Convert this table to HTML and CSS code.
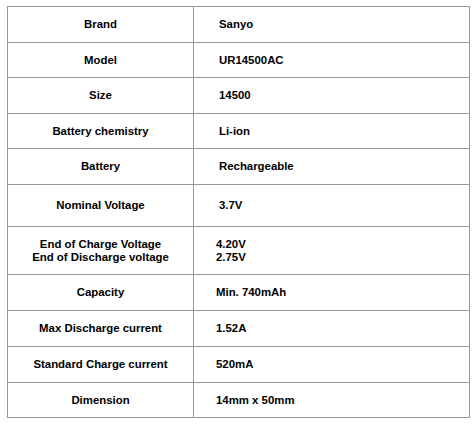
FILE: index.html
```html
<!DOCTYPE html>
<html>
<head>
<meta charset="utf-8">
<link rel="stylesheet" href="styles.css">
</head>
<body>
<table class="spec">
  <colgroup><col class="c1"><col class="c2"></colgroup>
  <tr class="r36"><td class="key">Brand</td><td class="val">Sanyo</td></tr>
  <tr class="r35"><td class="key">Model</td><td class="val">UR14500AC</td></tr>
  <tr class="r36"><td class="key">Size</td><td class="val">14500</td></tr>
  <tr class="r35"><td class="key">Battery chemistry</td><td class="val">Li-ion</td></tr>
  <tr class="r36"><td class="key">Battery</td><td class="val">Rechargeable</td></tr>
  <tr class="r42"><td class="key">Nominal Voltage</td><td class="val">3.7V</td></tr>
  <tr class="r48"><td class="key">End of Charge Voltage<br>End of Discharge voltage</td><td class="val alt">4.20V<br>2.75V</td></tr>
  <tr class="r36"><td class="key">Capacity</td><td class="val alt">Min. 740mAh</td></tr>
  <tr class="r36"><td class="key">Max Discharge current</td><td class="val alt">1.52A</td></tr>
  <tr class="r36"><td class="key">Standard Charge current</td><td class="val alt">520mA</td></tr>
  <tr class="r35"><td class="key">Dimension</td><td class="val alt">14mm x 50mm</td></tr>
</table>
</body>
</html>
```
FILE: styles.css
```css
html, body {
  margin: 0;
  padding: 0;
  background: #ffffff;
}
body {
  padding: 6px 0 0 7px;
  font-family: "Liberation Sans", Arial, sans-serif;
  font-weight: bold;
  font-size: 11.4px;
  color: #000;
}
.spec {
  border-collapse: collapse;
  table-layout: fixed;
  width: 462px;
}
.c1 { width: 186px; }
.c2 { width: 276px; }
.spec td {
  border: 1px solid #999;
  padding: 0;
  vertical-align: middle;
  line-height: 13px;
}
.key { text-align: center; }
.val { padding-left: 25px !important; text-align: left; }
.val.alt { padding-left: 22px !important; }
.r35 { height: 35px; }
.r36 { height: 36px; }
.r42 { height: 42px; }
.r48 { height: 48px; }
```
